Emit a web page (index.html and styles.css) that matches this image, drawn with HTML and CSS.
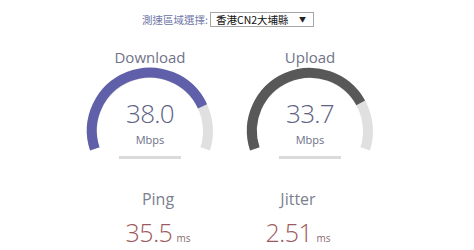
FILE: index.html
```html
<!DOCTYPE html>
<html lang="zh-Hant">
<head>
<meta charset="utf-8">
<title>Speedtest</title>
<link rel="stylesheet" href="styles.css">
</head>
<body>
<div class="page">
  <div class="region">
    <label class="region-label" for="server">測速區域選擇:</label>
    <span class="select-wrap">
      <select id="server" class="region-select">
        <option>香港CN2大埔縣</option>
      </select>
    </span>
  </div>

  <div class="gauges">
    <div class="gauge">
      <svg class="meter" width="160" height="120" viewBox="0 0 160 120">
        <path class="meter-bg" d="M24.8 103.9 A58 58 0 1 1 135.2 103.9"/>
        <path class="meter-dl" d="M24.8 103.9 A58 58 0 0 1 132.5 61.3"/>
        <rect class="meter-prog" x="49" y="111" width="62" height="3"/>
      </svg>
      <div class="gauge-title">Download</div>
      <div class="gauge-value">38.0</div>
      <div class="gauge-unit">Mbps</div>
    </div>
    <div class="gauge">
      <svg class="meter" width="160" height="120" viewBox="0 0 160 120">
        <path class="meter-bg" d="M24.8 103.9 A58 58 0 1 1 135.2 103.9"/>
        <path class="meter-ul" d="M24.8 103.9 A58 58 0 0 1 130.7 57.8"/>
        <rect class="meter-prog" x="49" y="111" width="62" height="3"/>
      </svg>
      <div class="gauge-title">Upload</div>
      <div class="gauge-value">33.7</div>
      <div class="gauge-unit">Mbps</div>
    </div>
  </div>

  <div class="stats">
    <div class="stat">
      <div class="stat-title">Ping</div>
      <div class="stat-line"><span class="stat-value">35.5</span><span class="stat-unit">ms</span></div>
    </div>
    <div class="stat">
      <div class="stat-title">Jitter</div>
      <div class="stat-line"><span class="stat-value">2.51</span><span class="stat-unit">ms</span></div>
    </div>
  </div>
</div>
</body>
</html>
```

FILE: styles.css
```css
html, body {
  margin: 0;
  padding: 0;
  background: #ffffff;
}

body {
  font-family: "Open Sans", "Noto Sans", "Noto Sans CJK TC", sans-serif;
  color: #6b6f85;
}

.page {
  width: 460px;
}

/* server selector */
.region {
  display: flex;
  justify-content: center;
  align-items: center;
  gap: 2px;
  padding-top: 12px;
  height: 15px;
  margin-right: 4px;
}

.region-label {
  font-family: "Noto Sans CJK TC", sans-serif;
  font-size: 10.5px;
  line-height: 15px;
  color: #6e75a6;
}

.select-wrap {
  position: relative;
  display: block;
  width: 104px;
  height: 15px;
}

.region-select {
  appearance: none;
  -webkit-appearance: none;
  display: block;
  width: 104px;
  height: 15px;
  margin: 0;
  padding: 0 0 0 5px;
  box-sizing: border-box;
  border: 1px solid #a6a6a6;
  border-radius: 0;
  background: #ffffff;
  font-family: "Noto Sans CJK TC", sans-serif;
  font-size: 10.5px;
  line-height: 13px;
  color: #111111;
}

.select-wrap::after {
  content: "\25BC";
  position: absolute;
  right: 8px;
  top: 3px;
  font-size: 7px;
  line-height: 9px;
  color: #222222;
  pointer-events: none;
}

/* gauges */
.gauges {
  display: flex;
  justify-content: center;
  margin-top: 18px;
}

.gauge {
  display: grid;
  width: 160px;
  height: 120px;
  text-align: center;
}

.gauge > * {
  grid-area: 1 / 1;
}

.meter {
  display: block;
}

.meter-bg,
.meter-dl,
.meter-ul {
  fill: none;
  stroke-width: 10;
  stroke-linecap: butt;
}

.meter-bg { stroke: #e0e0e0; }
.meter-dl { stroke: #6060aa; }
.meter-ul { stroke: #585858; }
.meter-prog { fill: #dadada; }

.gauge-title {
  align-self: start;
  margin-top: 5px;
  font-size: 15px;
  line-height: 1;
  color: #6f7388;
}

.gauge-value {
  align-self: start;
  margin-top: 55px;
  font-size: 26px;
  font-weight: 300;
  line-height: 1;
  letter-spacing: -0.7px;
  color: #5e6284;
}

.gauge-unit {
  align-self: start;
  margin-top: 89px;
  font-size: 11px;
  line-height: 1;
  color: #6c7088;
}

/* ping / jitter */
.stats {
  display: flex;
  justify-content: center;
  margin-right: 4px;
}

.stat {
  width: 140px;
  text-align: center;
}

.stat-title {
  margin-top: 26px;
  font-size: 16px;
  line-height: 1;
  color: #7b7f90;
}

.stat-line {
  display: flex;
  justify-content: center;
  align-items: baseline;
  gap: 4px;
  margin-top: 13px;
}

.stat-value {
  font-size: 25px;
  font-weight: 300;
  line-height: 1;
  letter-spacing: -0.5px;
  color: #9b5a5e;
}

.stat-unit {
  font-size: 10px;
  line-height: 1;
  color: #8a6a6e;
}
```
